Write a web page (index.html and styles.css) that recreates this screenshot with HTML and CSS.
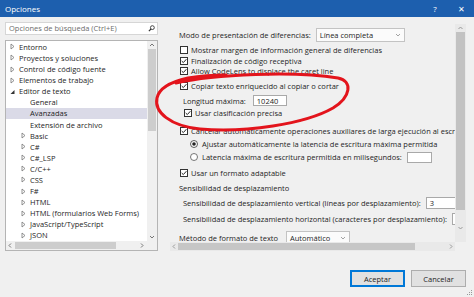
FILE: index.html
```html
<!DOCTYPE html>
<html>
<head>
<meta charset="utf-8">
<title>Opciones</title>
<link rel="stylesheet" href="styles.css">
</head>
<body>

<div class="window">

	<div class="titlebar">
		<span class="title">Opciones</span>
		<span class="tb_btns"><span>?</span><span>✕</span></span>
	</div>

	<div class="main">

		<!-- columna izquierda: búsqueda + árbol -->
		<div class="left">
			<div class="search">
				<span>Opciones de búsqueda (Ctrl+E)</span>
				<svg class="lupa" viewBox="0 0 8 8"><circle cx="5" cy="3" r="2.2" fill="none" stroke="#333" stroke-width="1"/><path d="M3.4 4.6L1 7" stroke="#333" stroke-width="1.3"/></svg>
			</div>

			<div class="tree">
				<div class="tree_body">
					<div class="tree_items">
						<div class="item l0"><svg class="arr" viewBox="0 0 5 7"><path d="M1 1L4 3.5L1 6Z" fill="none" stroke="#777" stroke-width=".8"/></svg>Entorno</div>
						<div class="item l0"><svg class="arr" viewBox="0 0 5 7"><path d="M1 1L4 3.5L1 6Z" fill="none" stroke="#777" stroke-width=".8"/></svg>Proyectos y soluciones</div>
						<div class="item l0"><svg class="arr" viewBox="0 0 5 7"><path d="M1 1L4 3.5L1 6Z" fill="none" stroke="#777" stroke-width=".8"/></svg>Control de código fuente</div>
						<div class="item l0"><svg class="arr" viewBox="0 0 5 7"><path d="M1 1L4 3.5L1 6Z" fill="none" stroke="#777" stroke-width=".8"/></svg>Elementos de trabajo</div>
						<div class="item l0"><svg class="arr" viewBox="0 0 5 7"><path d="M4.5 2L4.5 6L0.5 6Z" fill="#333"/></svg>Editor de texto</div>
						<div class="item leaf">General</div>
						<div class="item leaf selected">Avanzadas</div>
						<div class="item leaf">Extensión de archivo</div>
						<div class="item l1"><svg class="arr" viewBox="0 0 5 7"><path d="M1 1L4 3.5L1 6Z" fill="none" stroke="#777" stroke-width=".8"/></svg>Basic</div>
						<div class="item l1"><svg class="arr" viewBox="0 0 5 7"><path d="M1 1L4 3.5L1 6Z" fill="none" stroke="#777" stroke-width=".8"/></svg>C#</div>
						<div class="item l1"><svg class="arr" viewBox="0 0 5 7"><path d="M1 1L4 3.5L1 6Z" fill="none" stroke="#777" stroke-width=".8"/></svg>C#_LSP</div>
						<div class="item l1"><svg class="arr" viewBox="0 0 5 7"><path d="M1 1L4 3.5L1 6Z" fill="none" stroke="#777" stroke-width=".8"/></svg>C/C++</div>
						<div class="item l1"><svg class="arr" viewBox="0 0 5 7"><path d="M1 1L4 3.5L1 6Z" fill="none" stroke="#777" stroke-width=".8"/></svg>CSS</div>
						<div class="item l1"><svg class="arr" viewBox="0 0 5 7"><path d="M1 1L4 3.5L1 6Z" fill="none" stroke="#777" stroke-width=".8"/></svg>F#</div>
						<div class="item l1"><svg class="arr" viewBox="0 0 5 7"><path d="M1 1L4 3.5L1 6Z" fill="none" stroke="#777" stroke-width=".8"/></svg>HTML</div>
						<div class="item l1"><svg class="arr" viewBox="0 0 5 7"><path d="M1 1L4 3.5L1 6Z" fill="none" stroke="#777" stroke-width=".8"/></svg>HTML (formularios Web Forms)</div>
						<div class="item l1"><svg class="arr" viewBox="0 0 5 7"><path d="M1 1L4 3.5L1 6Z" fill="none" stroke="#777" stroke-width=".8"/></svg>JavaScript/TypeScript</div>
						<div class="item l1"><svg class="arr" viewBox="0 0 5 7"><path d="M1 1L4 3.5L1 6Z" fill="none" stroke="#777" stroke-width=".8"/></svg>JSON</div>
					</div>
					<div class="vscroll">
						<svg class="sarrow" viewBox="0 0 10 8"><path d="M3 5L5 3L7 5" fill="none" stroke="#777" stroke-width="1"/></svg>
						<div class="thumb tree_thumb"></div>
						<div class="spacer"></div>
						<svg class="sarrow" viewBox="0 0 10 8"><path d="M3 3L5 5L7 3" fill="none" stroke="#777" stroke-width="1"/></svg>
					</div>
				</div>
				<div class="hscroll">
					<svg class="harrow" viewBox="0 0 8 9"><path d="M5 2.5L3 4.5L5 6.5" fill="none" stroke="#777" stroke-width="1"/></svg>
					<div class="hthumb tree_hthumb"></div>
					<div class="spacer"></div>
					<svg class="harrow" viewBox="0 0 8 9"><path d="M3 2.5L5 4.5L3 6.5" fill="none" stroke="#777" stroke-width="1"/></svg>
					<div class="corner tree_corner"></div>
				</div>
			</div>
		</div>

		<!-- panel derecho: opciones -->
		<div class="right">
			<div class="panel_body">
				<div class="panel_content">

					<div class="row r1">Modo de presentación de diferencias:<span class="combo combo_modo">Línea completa<svg class="chev" viewBox="0 0 8 6"><path d="M2 2L4 4L6 2" fill="none" stroke="#999" stroke-width=".9"/></svg></span></div>

					<div class="row r2"><svg class="cb" viewBox="0 0 8 8"><rect x=".5" y=".5" width="7" height="7" fill="#fff" stroke="#333"/></svg>Mostrar margen de información general de diferencias</div>
					<div class="row r3"><svg class="cb" viewBox="0 0 8 8"><rect x=".5" y=".5" width="7" height="7" fill="#fff" stroke="#333"/><path d="M1.7 4L3.3 5.6L6.4 2.2" fill="none" stroke="#222" stroke-width="1"/></svg>Finalización de código receptiva</div>
					<div class="row r4"><svg class="cb" viewBox="0 0 8 8"><rect x=".5" y=".5" width="7" height="7" fill="#fff" stroke="#333"/><path d="M1.7 4L3.3 5.6L6.4 2.2" fill="none" stroke="#222" stroke-width="1"/></svg>Allow CodeLens to displace the caret line</div>

					<div class="row r5"><svg class="cb" viewBox="0 0 8 8"><rect x=".5" y=".5" width="7" height="7" fill="#fff" stroke="#333"/><path d="M1.7 4L3.3 5.6L6.4 2.2" fill="none" stroke="#222" stroke-width="1"/></svg>Copiar texto enriquecido al copiar o cortar</div>
					<div class="row r6 sub">Longitud máxima:<span class="txt txt_long">10240</span></div>
					<div class="row r7 sub2"><svg class="cb" viewBox="0 0 8 8"><rect x=".5" y=".5" width="7" height="7" fill="#fff" stroke="#333"/><path d="M1.7 4L3.3 5.6L6.4 2.2" fill="none" stroke="#222" stroke-width="1"/></svg>Usar clasificación precisa</div>

					<div class="row r8"><svg class="cb" viewBox="0 0 8 8"><rect x=".5" y=".5" width="7" height="7" fill="#fff" stroke="#333"/><path d="M1.7 4L3.3 5.6L6.4 2.2" fill="none" stroke="#222" stroke-width="1"/></svg>Cancelar automáticamente operaciones auxiliares de larga ejecución al escribir</div>
					<div class="row r9 radio_row"><svg class="rb" viewBox="0 0 8 8"><circle cx="4" cy="4" r="3.5" fill="#fff" stroke="#333" stroke-width=".8"/><circle cx="4" cy="4" r="1.8" fill="#222"/></svg>Ajustar automáticamente la latencia de escritura máxima permitida</div>
					<div class="row r10 radio_row"><svg class="rb" viewBox="0 0 8 8"><circle cx="4" cy="4" r="3.5" fill="#fff" stroke="#555" stroke-width=".8"/></svg>Latencia máxima de escritura permitida en milisegundos:<span class="txt txt_ms"></span></div>

					<div class="row r11"><svg class="cb" viewBox="0 0 8 8"><rect x=".5" y=".5" width="7" height="7" fill="#fff" stroke="#333"/><path d="M1.7 4L3.3 5.6L6.4 2.2" fill="none" stroke="#222" stroke-width="1"/></svg>Usar un formato adaptable</div>

					<div class="row r12">Sensibilidad de desplazamiento</div>
					<div class="row r13 sub">Sensibilidad de desplazamiento vertical (líneas por desplazamiento):<span class="txt txt_num">3</span></div>
					<div class="row r14 sub">Sensibilidad de desplazamiento horizontal (caracteres por desplazamiento):<span class="txt txt_num"></span></div>

					<div class="row r15">Método de formato de texto<span class="combo combo_auto">Automático<svg class="chev" viewBox="0 0 8 6"><path d="M2 2L4 4L6 2" fill="none" stroke="#999" stroke-width=".9"/></svg></span></div>

				</div>
				<div class="vscroll pvscroll">
					<svg class="sarrow" viewBox="0 0 11 8"><path d="M3.5 5L5.5 3L7.5 5" fill="none" stroke="#999" stroke-width="1"/></svg>
					<div class="thumb panel_thumb"></div>
					<div class="spacer"></div>
					<svg class="sarrow" viewBox="0 0 11 8"><path d="M3.5 3L5.5 5L7.5 3" fill="none" stroke="#999" stroke-width="1"/></svg>
					<div class="pv_end"></div>
				</div>
			</div>
			<div class="hscroll phscroll">
				<svg class="harrow" viewBox="0 0 8 9"><path d="M5 2.5L3 4.5L5 6.5" fill="none" stroke="#999" stroke-width="1"/></svg>
				<div class="hthumb panel_hthumb"></div>
				<div class="spacer"></div>
				<svg class="harrow" viewBox="0 0 8 9"><path d="M3 2.5L5 4.5L3 6.5" fill="none" stroke="#999" stroke-width="1"/></svg>
				<div class="corner"></div>
			</div>
		</div>

	</div>

	<div class="footer">
		<button class="btn btn_default">Aceptar</button>
		<button class="btn">Cancelar</button>
	</div>

	<!-- marca roja a mano alzada -->
	<svg class="redmark" viewBox="0 0 474 297">
		<path d="M176 83 C 215 74, 295 71, 338 78 C 353 81, 351 97, 333 108 C 305 124, 245 133, 200 129 C 170 126, 154 112, 157 98 C 159 88, 170 82, 188 78 C 200 76, 212 75, 226 75" fill="none" stroke="#e3141c" stroke-width="3" stroke-linecap="round"/>
	</svg>

	<svg class="grip" viewBox="0 0 8 8">
		<rect x="6" y="2" width="1" height="1" fill="#999"/>
		<rect x="4" y="4" width="1" height="1" fill="#999"/>
		<rect x="6" y="4" width="1" height="1" fill="#999"/>
		<rect x="2" y="6" width="1" height="1" fill="#999"/>
		<rect x="4" y="6" width="1" height="1" fill="#999"/>
		<rect x="6" y="6" width="1" height="1" fill="#999"/>
	</svg>

</div>

</body>
</html>
```

FILE: styles.css
```css
body{
	margin: 0px;
	padding: 0px;
	font-family: "Open Sans", "Noto Sans", sans-serif;
	font-size: 7.5px;
	color: #1e1e1e;
}

.window{
	width: 474px;
	height: 297px;
	background-color: #f0f0f0;
	position: relative;
	overflow: hidden;
}

/* barra de título */
.titlebar{
	height: 17px;
	background-color: #1d5fae;
	color: #fff;
	display: flex;
	align-items: center;
	justify-content: space-between;
	padding-left: 5px;
	font-size: 8px;
}

.tb_btns{
	display: flex;
}

.tb_btns span{
	width: 26px;
	text-align: center;
}

.main{
	display: flex;
	height: 229px;
	margin-top: 5px;
	padding-left: 5px;
}

/* columna izquierda */
.left{
	width: 153px;
	display: flex;
	flex-direction: column;
	gap: 5px;
}

.search{
	height: 13px;
	box-sizing: border-box;
	border: 1px solid #d6d6d6;
	background-color: #fff;
	color: #6d6d6d;
	display: flex;
	align-items: center;
	justify-content: space-between;
	padding: 0px 2px 0px 3px;
}

.lupa{
	width: 7px;
	height: 7px;
}

.tree{
	flex: 1;
	border: 1px solid #b4b4b4;
	background-color: #fff;
	display: flex;
	flex-direction: column;
}

.tree_body{
	flex: 1;
	display: flex;
	min-height: 0;
}

.tree_items{
	flex: 1;
	overflow: hidden;
	padding-top: 0.5px;
}

.item{
	height: 11.1px;
	display: flex;
	align-items: center;
	white-space: nowrap;
}

.arr{
	width: 5px;
	height: 7px;
	margin-right: 4px;
	flex: none;
}

.l0{
	padding-left: 4px;
}

.l1{
	padding-left: 15px;
}

.leaf{
	padding-left: 24px;
}

.selected{
	background-color: #dadae7;
}

/* barras de desplazamiento */
.vscroll{
	width: 10px;
	background-color: #f0f0f0;
	display: flex;
	flex-direction: column;
}

.sarrow{
	width: 100%;
	height: 8px;
	flex: none;
}

.thumb{
	margin: 0px 1px;
	background-color: #cdcdcd;
	flex: none;
}

.tree_thumb{
	height: 82px;
}

.spacer{
	flex: 1;
}

.hscroll{
	height: 9px;
	background-color: #f0f0f0;
	display: flex;
	align-items: center;
}

.harrow{
	width: 8px;
	height: 9px;
	flex: none;
}

.hthumb{
	height: 7px;
	background-color: #cdcdcd;
	flex: none;
}

.tree_hthumb{
	width: 101px;
	margin-left: 1px;
}

.corner{
	width: 10px;
	height: 9px;
	flex: none;
}

/* panel derecho */
.right{
	width: 296px;
	margin-left: 12px;
	margin-top: 2px;
	display: flex;
	flex-direction: column;
}

.panel_body{
	height: 218px;
	display: flex;
}

.panel_content{
	flex: 1;
	overflow: hidden;
	padding: 4px 0px 0px 9px;
}

.pvscroll{
	width: 11px;
	background-color: #e9e9e9;
}

.panel_thumb{
	height: 178px;
	background-color: #c2c2c2;
}

.pv_end{
	height: 10px;
}

.phscroll{
	background-color: #e9e9e9;
}

.panel_hthumb{
	width: 237px;
	background-color: #c6c6c6;
}

.corner{
	width: 11px;
	background-color: #f0f0f0;
}

.row{
	display: flex;
	align-items: center;
	height: 11px;
	white-space: nowrap;
}

.cb{
	width: 8px;
	height: 8px;
	margin-left: 1px;
	margin-right: 3px;
	flex: none;
}

.rb{
	width: 8px;
	height: 8px;
	margin-right: 4px;
	flex: none;
}

.r1{ height: 14px; }
.r2{ height: 10.5px; margin-top: 3px; }
.r3{ height: 10.5px; }
.r4{ height: 10.5px; }
.r5{ margin-top: 4px; }
.r6{ margin-top: 3.5px; }
.r7{ margin-top: 1.5px; }
.r8{ margin-top: 6.5px; }
.r9{ margin-top: 2.5px; }
.r10{ margin-top: 2px; }
.r11{ margin-top: 5px; }
.r12{ margin-top: 4px; }
.r13{ height: 12px; margin-top: 3.5px; }
.r14{ height: 12px; margin-top: 4px; }
.r15{ height: 13px; margin-top: 6px; }

.sub{
	padding-left: 4px;
}

.sub2{
	padding-left: 4px;
}

.radio_row{
	padding-left: 11px;
}

.combo{
	display: flex;
	align-items: center;
	justify-content: space-between;
	box-sizing: border-box;
	border: 1px solid #c3c3c3;
	background-color: #fbfbfb;
	padding-left: 3px;
	flex: none;
}

.combo_modo{
	width: 89px;
	height: 14px;
	margin-left: 5px;
}

.combo_auto{
	width: 64px;
	height: 13px;
	margin-left: 8px;
}

.chev{
	width: 8px;
	height: 6px;
	margin-right: 2px;
}

.txt{
	box-sizing: border-box;
	height: 11px;
	border: 1px solid #a9a9a9;
	background-color: #fff;
	padding-left: 3px;
	display: flex;
	align-items: center;
	flex: none;
}

.txt_long{
	width: 34px;
	margin-left: 7px;
}

.txt_ms{
	width: 25px;
	margin-left: 5px;
}

.txt_num{
	width: 30px;
	height: 12px;
	margin-left: 5px;
}

/* botones inferiores */
.footer{
	display: flex;
	justify-content: flex-end;
	gap: 6px;
	padding-right: 8px;
	margin-top: 19px;
}

.btn{
	width: 55px;
	height: 17px;
	border: 1px solid #adadad;
	background-color: #e1e1e1;
	font-family: inherit;
	font-size: 7.5px;
	color: #1e1e1e;
	padding: 0px;
}

.btn_default{
	border-color: #0078d7;
	box-shadow: inset 0px 0px 0px 1px #0078d7;
}

.redmark{
	position: absolute;
	top: 0;
	left: 0;
	width: 474px;
	height: 297px;
	pointer-events: none;
}

.grip{
	position: absolute;
	right: 1px;
	bottom: 1px;
	width: 8px;
	height: 8px;
}
```
